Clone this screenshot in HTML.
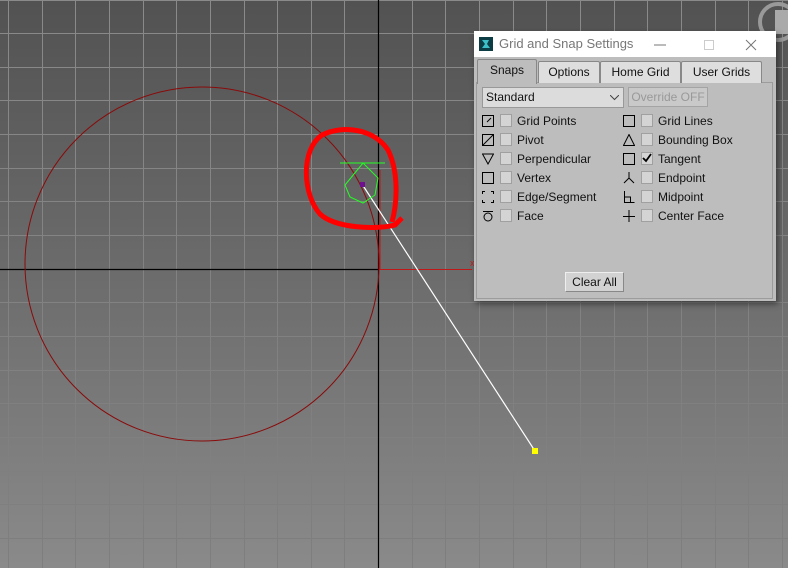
<!DOCTYPE html>
<html><head><meta charset="utf-8"><style>
*{margin:0;padding:0;box-sizing:border-box}
body{width:788px;height:568px;overflow:hidden;position:relative;font-family:"Liberation Sans","Noto Sans CJK KR",sans-serif;font-size:12px;color:#111}
svg.bg{position:absolute;left:0;top:0}
.dlg{position:absolute;left:474px;top:31px;width:302px;height:270px;background:#bdbdbd;box-shadow:2px 3px 6px rgba(0,0,0,.45)}
.title{height:26px;background:#fff;position:relative}
.title span{position:absolute;left:25px;top:5px;color:#777;font-size:13px}
.tabs{position:absolute;top:29px;left:3px;height:23px}
.tab{position:absolute;top:1px;height:22px;border:1px solid #888;border-bottom:none;background:#dedede;text-align:center;line-height:20px;border-radius:2px 2px 0 0}
.tab.act{background:#bdbdbd;top:-1px;height:25px}
.pane{position:absolute;left:2px;top:51px;width:297px;height:217px;border:1px solid #9c9c9c}
.sel{position:absolute;left:8px;top:56px;width:142px;height:21px;background:#dcdcdc;border:1px solid #999;padding-left:3px;line-height:19px}
.ov{position:absolute;left:154px;top:56px;width:80px;height:20px;background:#c9c9c9;border:1px solid #a4a4a4;color:#999;text-align:center;line-height:18px}
.row{position:absolute;height:16px;line-height:16px}
.cb{position:absolute;top:1px;width:12px;height:13px;background:#d4d4d4;border:1px solid #a0a0a0}
.ic{position:absolute;top:2px;width:12px;height:12px}
.lb{position:absolute;top:0;white-space:nowrap}
.btn{position:absolute;left:91px;top:241px;width:59px;height:20px;background:#d2d2d2;border:1px solid #888;border-top-color:#eee;border-left-color:#eee;text-align:center;line-height:18px}
</style></head><body>
<svg class="bg" width="788" height="568">
<defs>
<linearGradient id="g" x1="0" y1="0" x2="0" y2="568" gradientUnits="userSpaceOnUse"><stop offset="0" stop-color="#525252"/><stop offset="0.45" stop-color="#6a6a6a"/><stop offset="1" stop-color="#8a8a8a"/></linearGradient>
<linearGradient id="l" x1="0" y1="0" x2="0" y2="568" gradientUnits="userSpaceOnUse"><stop offset="0" stop-color="#8a8a8a"/><stop offset="0.5" stop-color="#828282"/><stop offset="1" stop-color="#7e7e7e"/></linearGradient>
</defs>
<rect width="788" height="568" fill="url(#g)"/>
<g stroke="url(#l)" stroke-width="1">
<path d="M8.5 0V568M42.5 0V568M75.5 0V568M109.5 0V568M143.5 0V568M176.5 0V568M210.5 0V568M244.5 0V568M277.5 0V568M311.5 0V568M344.5 0V568M412.5 0V568M445.5 0V568M479.5 0V568M513.5 0V568M546.5 0V568M580.5 0V568M614.5 0V568M647.5 0V568M681.5 0V568M715.5 0V568M748.5 0V568M782.5 0V568"/>
<path d="M0 0.5H788M0 33.5H788M0 67.5H788M0 100.5H788M0 134.5H788M0 168.5H788M0 201.5H788M0 235.5H788M0 302.5H788M0 336.5H788M0 370.5H788M0 403.5H788M0 437.5H788M0 471.5H788M0 504.5H788M0 538.5H788"/>
</g>
<path d="M378.5 0V568M0 269.5H378" stroke="#000" stroke-width="1.2"/>
<path d="M379 269.5H472M380 170V269" stroke="#c01818" stroke-width="1"/>
<text x="470" y="266" fill="#c02020" font-size="9" font-family="Liberation Sans">x</text>
<circle cx="202" cy="264" r="177" fill="none" stroke="#8a0a0a" stroke-width="1"/>
<path d="M362 184L535 451" stroke="#fff" stroke-width="1.2"/>
<rect x="532" y="448" width="6" height="6" fill="#ff0"/>
<path d="M340 163H385M363 163L378 178L375 195L363 203L350 197L345 185Z" fill="none" stroke="#2f2" stroke-width="1"/>
<rect x="360" y="182" width="5" height="5" fill="#701090"/>
<path d="M392 222C398 200 398 170 388 150C375 130 345 124 322 135C300 150 303 195 320 214C335 228 375 230 395 225L402 218" fill="none" stroke="#f00" stroke-width="5"/>
<circle cx="778" cy="22" r="18" fill="none" stroke="#999" stroke-width="4"/>
<rect x="775" y="10" width="13" height="24" fill="#aaa"/>
</svg>
<div class="dlg">
<div class="title">
<svg style="position:absolute;left:5px;top:6px" width="14" height="14"><rect width="14" height="14" fill="#0c3c44"/><path d="M3 3H10L8 7L11 11H3L6 7Z" fill="#3cc0c8"/></svg>
<span>Grid and Snap Settings</span>
<svg style="position:absolute;left:180px;top:8px" width="110" height="12"><path d="M0 6H12" stroke="#777"/><rect x="50.5" y="1.5" width="9" height="9" fill="none" stroke="#ccc"/><path d="M92 1L102 11M102 1L92 11" stroke="#777"/></svg>
</div>
<div class="pane"></div>
<div class="tabs">
<div class="tab act" style="left:0;width:60px">Snaps</div>
<div class="tab" style="left:61px;width:62px">Options</div>
<div class="tab" style="left:123px;width:81px">Home Grid</div>
<div class="tab" style="left:204px;width:81px">User Grids</div>
</div>
<div class="sel">Standard<svg style="position:absolute;right:4px;top:7px" width="9" height="6"><path d="M0 0L4.5 4.5L9 0" fill="none" stroke="#444"/></svg></div>
<div class="ov">Override OFF</div>

<div class="row" style="left:0;top:82px;width:150px"><svg class="ic" style="left:8px" viewBox="0 0 12 12"><rect x=".5" y=".5" width="11" height="11" fill="none" stroke="#000"/><path d="M5 7L9 3" stroke="#000"/></svg><div class="cb" style="left:26px"></div><div class="lb" style="left:43px">Grid Points</div></div>
<div class="row" style="left:0;top:101px;width:150px"><svg class="ic" style="left:8px" viewBox="0 0 12 12"><rect x=".5" y=".5" width="11" height="11" fill="none" stroke="#000"/><path d="M1 11L11 1" stroke="#000"/></svg><div class="cb" style="left:26px"></div><div class="lb" style="left:43px">Pivot</div></div>
<div class="row" style="left:0;top:120px;width:150px"><svg class="ic" style="left:8px" viewBox="0 0 12 12"><path d="M.5 1H11.5L6 11Z" fill="none" stroke="#000"/></svg><div class="cb" style="left:26px"></div><div class="lb" style="left:43px">Perpendicular</div></div>
<div class="row" style="left:0;top:139px;width:150px"><svg class="ic" style="left:8px" viewBox="0 0 12 12"><rect x=".5" y=".5" width="11" height="11" fill="none" stroke="#000"/></svg><div class="cb" style="left:26px"></div><div class="lb" style="left:43px">Vertex</div></div>
<div class="row" style="left:0;top:158px;width:150px"><svg class="ic" style="left:8px" viewBox="0 0 12 12"><path d="M.5 3V.5H3M9 .5H11.5V3M11.5 9V11.5H9M3 11.5H.5V9" fill="none" stroke="#000"/></svg><div class="cb" style="left:26px"></div><div class="lb" style="left:43px">Edge/Segment</div></div>
<div class="row" style="left:0;top:177px;width:150px"><svg class="ic" style="left:8px" viewBox="0 0 12 12"><path d="M1 1.5H11" stroke="#000"/><circle cx="6" cy="7" r="4" fill="none" stroke="#000"/></svg><div class="cb" style="left:26px"></div><div class="lb" style="left:43px">Face</div></div>

<div class="row" style="left:141px;top:82px;width:160px"><svg class="ic" style="left:8px" viewBox="0 0 12 12"><rect x=".5" y=".5" width="11" height="11" fill="none" stroke="#000"/></svg><div class="cb" style="left:26px"></div><div class="lb" style="left:43px">Grid Lines</div></div>
<div class="row" style="left:141px;top:101px;width:160px"><svg class="ic" style="left:8px" viewBox="0 0 12 12"><path d="M6 .5L11.5 11.5H.5Z" fill="none" stroke="#000"/></svg><div class="cb" style="left:26px"></div><div class="lb" style="left:43px">Bounding Box</div></div>
<div class="row" style="left:141px;top:120px;width:160px"><svg class="ic" style="left:8px" viewBox="0 0 12 12"><rect x=".5" y=".5" width="11" height="11" fill="none" stroke="#000"/></svg><div class="cb" style="left:26px"><svg width="10" height="11" style="position:absolute;left:0;top:0"><path d="M1 5L4 8L9 1" fill="none" stroke="#000" stroke-width="1.8"/></svg></div><div class="lb" style="left:43px">Tangent</div></div>
<div class="row" style="left:141px;top:139px;width:160px"><svg class="ic" style="left:8px" viewBox="0 0 12 12"><path d="M6 0V6L1 11M6 6L11 11" fill="none" stroke="#000"/></svg><div class="cb" style="left:26px"></div><div class="lb" style="left:43px">Endpoint</div></div>
<div class="row" style="left:141px;top:158px;width:160px"><svg class="ic" style="left:8px" viewBox="0 0 12 12"><path d="M1.5 0V11.5H11.5M7.5 11.5V6H1.5" fill="none" stroke="#000"/></svg><div class="cb" style="left:26px"></div><div class="lb" style="left:43px">Midpoint</div></div>
<div class="row" style="left:141px;top:177px;width:160px"><svg class="ic" style="left:8px" viewBox="0 0 12 12"><path d="M6 0V12M0 6.5H12" stroke="#000"/></svg><div class="cb" style="left:26px"></div><div class="lb" style="left:43px">Center Face</div></div>

<div class="btn">Clear All</div>
</div>
</body></html>
